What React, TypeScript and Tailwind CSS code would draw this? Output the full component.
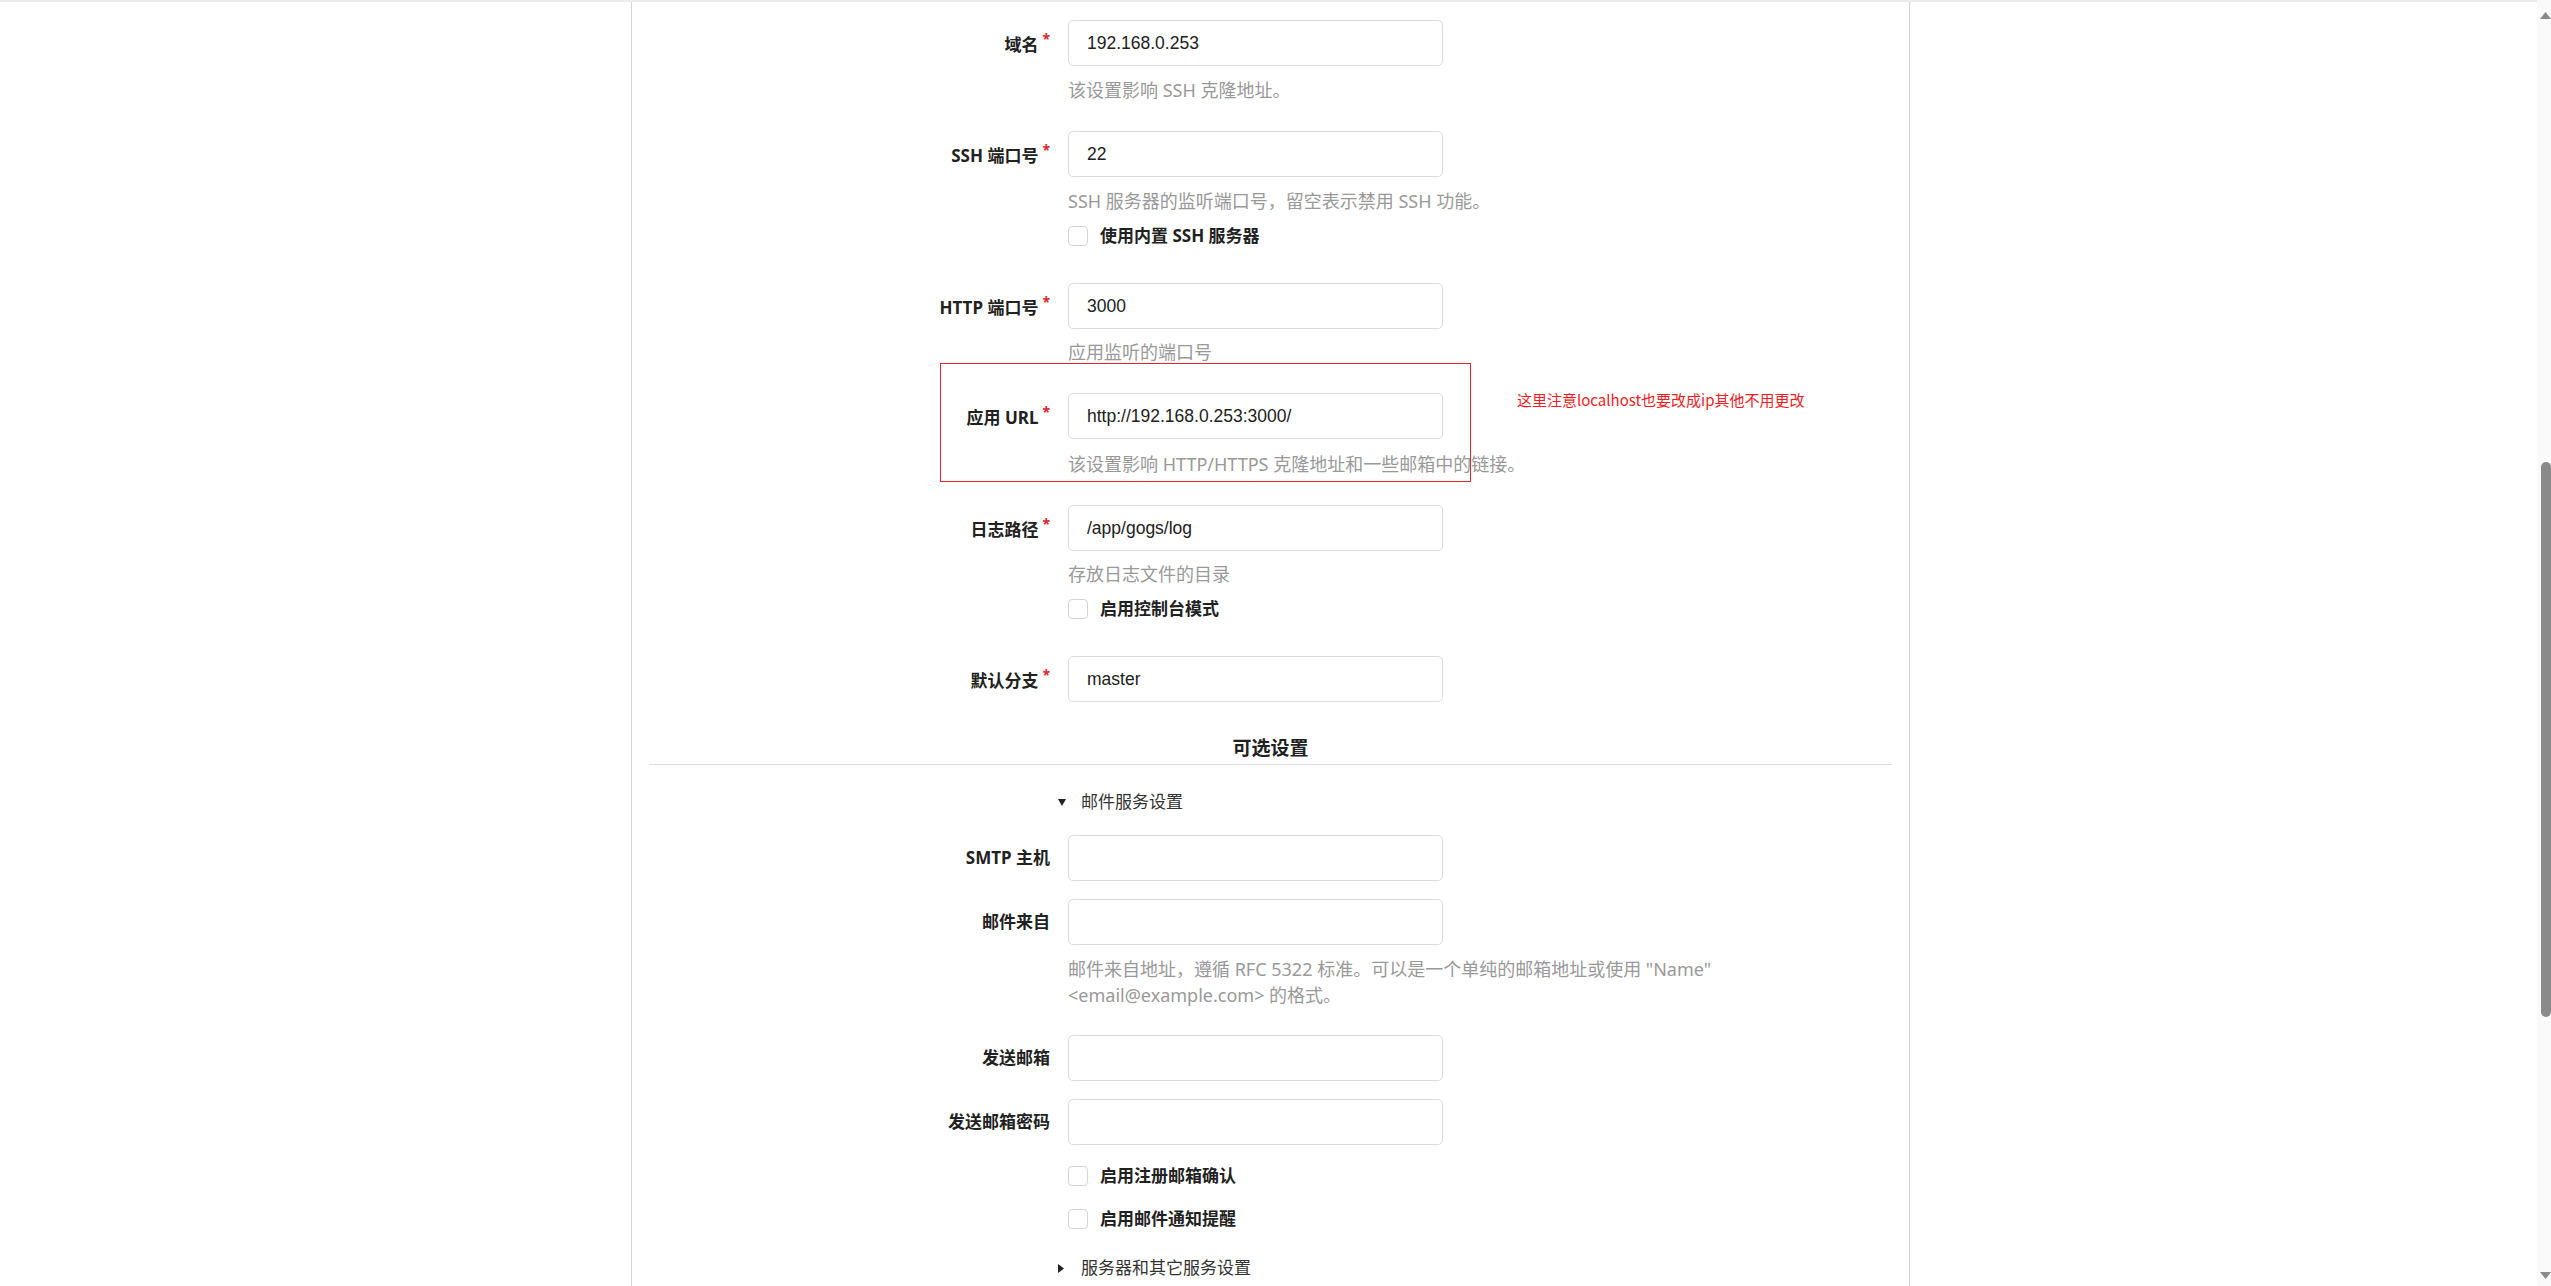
import React from "react";

const sans = "font-['Noto_Sans','Noto_Sans_CJK_SC',sans-serif]";

type FieldProps = {
  label: string;
  required?: boolean;
  value?: string;
  className?: string;
};

const Field = ({ label, required, value, className = "" }: FieldProps) => (
  <div className={`flex items-center ${className}`}>
    <label className={`w-[418px] text-right text-[17px] font-bold text-[#212121] ${sans}`}>
      {label}
      {required && <span className="ml-[4px] text-[14px] text-[#db2828] align-[7px]">*</span>}
    </label>
    <input
      defaultValue={value}
      className="ml-[18px] h-[46px] w-[375px] rounded-[5px] border border-[#dcdcdc] bg-white px-[18px] text-[17.5px] text-[#212121] outline-none font-['Liberation_Sans',sans-serif]"
    />
  </div>
);

const Help = ({ children, className = "" }: { children: React.ReactNode; className?: string }) => (
  <p className={`ml-[436px] max-w-[690px] text-[18px] leading-[26px] text-[#999999] ${sans} ${className}`}>
    {children}
  </p>
);

const Check = ({ label, className = "" }: { label: string; className?: string }) => (
  <div className={`ml-[436px] flex h-[26px] items-center gap-[12px] ${className}`}>
    <span className="h-[20px] w-[20px] rounded-[4px] border border-[#d4d4d5] bg-white" />
    <span className={`text-[17px] font-bold text-[#212121] ${sans}`}>{label}</span>
  </div>
);

const Summary = ({ label, open, className = "" }: { label: string; open?: boolean; className?: string }) => (
  <div className={`ml-[426px] flex h-[26px] items-center ${className}`}>
    <span className="flex w-[23px]">
      {open ? (
        <svg width="8" height="7" viewBox="0 0 8 7">
          <path d="M0 0h8L4 7z" fill="#222" />
        </svg>
      ) : (
        <svg width="6" height="9" viewBox="0 0 6 9">
          <path d="M0 0l6 4.5L0 9z" fill="#222" />
        </svg>
      )}
    </span>
    <span className={`text-[17px] text-[#333] ${sans}`}>{label}</span>
  </div>
);

const App = () => {
  return (
    <div className="flex h-[1286px] w-full overflow-hidden bg-white">
      <div className="flex-1 border-t-2 border-[#ececec]">
        <div className="ml-[631px] flex h-full w-[1279px] flex-col border-x border-[#d4d4d5] bg-white pt-[18px]">
          <Field label="域名" required value="192.168.0.253" />
          <Help className="mt-[11px]">该设置影响 SSH 克隆地址。</Help>

          <Field label="SSH 端口号" required value="22" className="mt-[28px]" />
          <Help className="mt-[11px]">SSH 服务器的监听端口号，留空表示禁用 SSH 功能。</Help>
          <Check label="使用内置 SSH 服务器" className="mt-[9px]" />

          <Field label="HTTP 端口号" required value="3000" className="mt-[34px]" />
          <Help className="mt-[10px]">应用监听的端口号</Help>

          <div className="relative mt-[28px]">
            <Field label="应用 URL" required value="http://192.168.0.253:3000/" />
            <Help className="mt-[12px]">该设置影响 HTTP/HTTPS 克隆地址和一些邮箱中的链接。</Help>
            <div className="pointer-events-none absolute left-[308px] top-[-30px] h-[119px] w-[531px] border-[1.5px] border-[#e5262b]" />
            <span className="absolute left-[885px] top-[-4px] whitespace-nowrap text-[15px] text-[#f01c23] font-['Noto_Sans_CJK_SC',sans-serif]">
              这里注意localhost也要改成ip其他不用更改
            </span>
          </div>

          <Field label="日志路径" required value="/app/gogs/log" className="mt-[28px]" />
          <Help className="mt-[10px]">存放日志文件的目录</Help>
          <Check label="启用控制台模式" className="mt-[9px]" />

          <Field label="默认分支" required value="master" className="mt-[34px]" />

          <h4 className={`mx-[17px] mt-[33px] border-b border-[#dedede] pb-[3px] text-center text-[19px] font-bold leading-[26px] text-[#212121] ${sans}`}>
            可选设置
          </h4>

          <Summary label="邮件服务设置" open className="mt-[24px]" />

          <Field label="SMTP 主机" className="mt-[20px]" />
          <Field label="邮件来自" className="mt-[18px]" />
          <Help className="mt-[11px]">
            邮件来自地址，遵循 RFC 5322 标准。可以是一个单纯的邮箱地址或使用 "Name" &lt;email@example.com&gt; 的格式。
          </Help>
          <Field label="发送邮箱" className="mt-[27px]" />
          <Field label="发送邮箱密码" className="mt-[18px]" />
          <Check label="启用注册邮箱确认" className="mt-[18px]" />
          <Check label="启用邮件通知提醒" className="mt-[17px]" />

          <Summary label="服务器和其它服务设置" className="mt-[23px]" />
        </div>
      </div>

      <div className="flex w-[14px] flex-col bg-[#fafafa]">
        <div className="flex h-[30px] items-start pl-[3px] pt-[12px]">
          <svg width="11" height="7" viewBox="0 0 11 7">
            <path d="M5.5 0L11 7H0z" fill="#8a8a8a" />
          </svg>
        </div>
        <div className="flex-1">
          <div className="ml-[4px] mt-[432px] h-[555px] w-[10px] rounded-t-[5px] rounded-b-[5px] bg-[#8a8a8a]" />
        </div>
        <div className="flex h-[14px] items-start pl-[3px]">
          <svg width="11" height="7" viewBox="0 0 11 7">
            <path d="M0 0h11L5.5 7z" fill="#8a8a8a" />
          </svg>
        </div>
      </div>
    </div>
  );
};

export default App;
